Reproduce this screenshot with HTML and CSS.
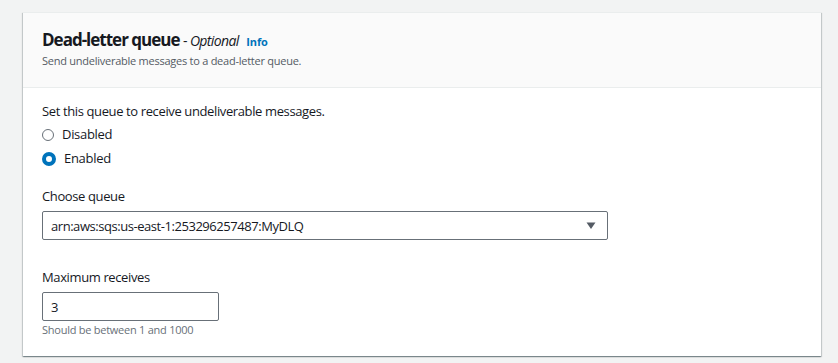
FILE: index.html
```html
<!DOCTYPE html>
<html>
<head>
<meta charset="utf-8">
<link rel="stylesheet" href="styles.css">
</head>
<body>
<div class="page">
  <section class="card">
    <header class="card-header">
      <h2 class="title"><span class="title-main">Dead-letter queue</span> <span class="title-opt">- <i>Optional</i></span> <a class="info">Info</a></h2>
      <p class="desc">Send undeliverable messages to a dead-letter queue.</p>
    </header>
    <div class="card-body">
      <div class="field">
        <div class="label">Set this queue to receive undeliverable messages.</div>
        <div class="radios">
          <label class="radio"><span class="dot"></span>Disabled</label>
          <label class="radio checked"><span class="dot"></span>Enabled</label>
        </div>
      </div>
      <div class="field">
        <div class="label">Choose queue</div>
        <div class="select">
          <span>arn:aws:sqs:us-east-1:253296257487:MyDLQ</span>
          <svg class="caret" width="10" height="8" viewBox="0 0 10 8"><path d="M0.5 0.5 H9.5 L5 7 Z" fill="#545b64"/></svg>
        </div>
      </div>
      <div class="field field-gap">
        <div class="label">Maximum receives</div>
        <div class="input">3</div>
        <div class="hint">Should be between 1 and 1000</div>
      </div>
    </div>
  </section>
</div>
</body>
</html>
```

FILE: styles.css
```css
html, body {
  margin: 0;
  padding: 0;
  background: #f2f3f3;
  font-family: "Open Sans", "Noto Sans", sans-serif;
  color: #16191f;
}
.page {
  padding: 12px 17px 6px 23px;
}
.card {
  background: #fff;
  box-shadow: 0 1px 1px 0 rgba(0,28,36,0.3), 1px 1px 1px 0 rgba(0,28,36,0.15), -1px 1px 1px 0 rgba(0,28,36,0.15);
  border-top: 1px solid #eaeded;
  height: 344px;
  box-sizing: border-box;
}
.card-header {
  background: #fafafa;
  border-bottom: 1px solid #eaeded;
  padding: 16px 19px 0 19px;
  height: 75px;
  box-sizing: border-box;
}
.title {
  margin: 0;
  font-size: 17px;
  line-height: 22px;
  font-weight: 700;
  letter-spacing: -1px;
}
.title-opt {
  font-weight: 400;
  font-size: 14px;
  letter-spacing: -0.6px;
}
.info {
  font-size: 11px;
  color: #0073bb;
  font-weight: 700;
  margin-left: 4px;
  letter-spacing: -0.1px;
}
.desc {
  margin: 0;
  font-size: 11px;
  line-height: 16px;
  color: #545b64;
  letter-spacing: -0.25px;
}
.card-body {
  padding: 13px 19px 0 19px;
}
.label {
  font-size: 13px;
  line-height: 20px;
  letter-spacing: -0.38px;
}
.field + .field {
  margin-top: 18px;
}
.field + .field-gap {
  margin-top: 27px;
}
.radios {
  display: flex;
  flex-direction: column;
  gap: 4px;
  margin-top: 3px;
}
.radio {
  display: flex;
  align-items: center;
  font-size: 13px;
  line-height: 20px;
  letter-spacing: -0.3px;
}
.dot {
  width: 10px;
  height: 10px;
  border: 1.5px solid #687078;
  border-radius: 50%;
  margin: 2px 8px 0 0;
  box-sizing: content-box;
}
.radio.checked .dot {
  border: 4px solid #0073bb;
  width: 6px;
  height: 6px;
  background: #fff;
}
.select {
  margin-top: 5px;
  width: 566px;
  height: 29px;
  box-sizing: border-box;
  border: 1px solid #687078;
  border-radius: 2px;
  display: flex;
  align-items: center;
  justify-content: space-between;
  padding: 0 11px 0 8px;
  font-size: 13px;
  letter-spacing: -0.45px;
}
.input {
  margin-top: 5px;
  width: 177px;
  height: 29px;
  box-sizing: border-box;
  border: 1px solid #687078;
  border-radius: 2px;
  display: flex;
  align-items: center;
  padding: 0 8px;
  font-size: 13px;
}
.hint {
  font-size: 11px;
  line-height: 16px;
  color: #687078;
  margin-top: 1px;
  letter-spacing: -0.25px;
}
```
